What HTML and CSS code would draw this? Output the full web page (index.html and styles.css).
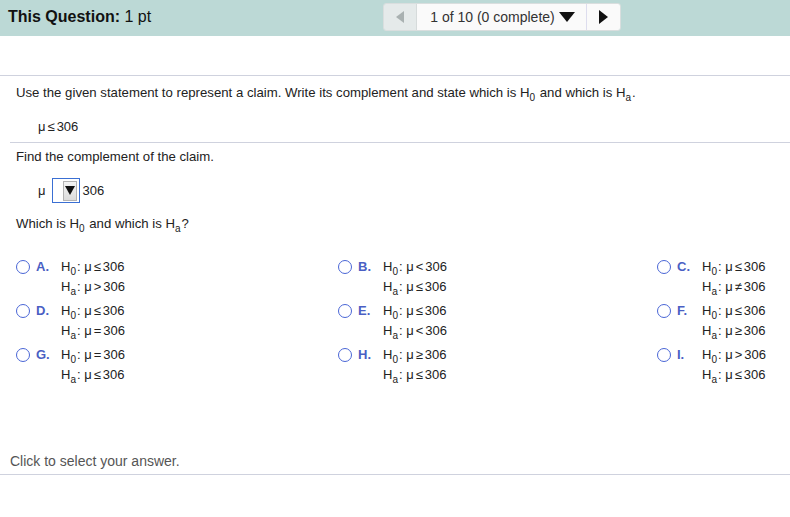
FILE: index.html
```html
<!DOCTYPE html>
<html>
<head>
<meta charset="utf-8">
<link rel="stylesheet" href="styles.css">
</head>
<body>
<div class="header">
  <div class="title"><b>This Question:</b> 1 pt</div>
  <div class="nav">
    <div class="nbtn prev"><span class="tri-left"></span></div>
    <div class="nbtn mid">1 of 10 (0 complete) <span class="tri-down"></span></div>
    <div class="nbtn next"><span class="tri-right"></span></div>
  </div>
</div>

<div class="question">
  <p class="q1">Use the given statement to represent a claim. Write its complement and state which is H<sub>0</sub> and which is H<sub>a</sub>.</p>
  <p class="math claim">μ<span class="op">≤</span>306</p>
</div>

<div class="work">
  <p class="q2">Find the complement of the claim.</p>
  <div class="selrow math">
    <span>μ</span>
    <span class="selbox"><span class="selbtn"><span class="tri-down small"></span></span></span>
    <span>306</span>
  </div>
  <p class="q3">Which is H<sub>0</sub> and which is H<sub>a</sub>?</p>

  <div class="options">
    <div class="opt"><span class="radio"></span><span class="letter">A.</span><div class="hyp"><div>H<sub>0</sub>: μ<span class="op">≤</span>306</div><div>H<sub>a</sub>: μ<span class="op">&gt;</span>306</div></div></div>
    <div class="opt"><span class="radio"></span><span class="letter">B.</span><div class="hyp"><div>H<sub>0</sub>: μ<span class="op">&lt;</span>306</div><div>H<sub>a</sub>: μ<span class="op">≤</span>306</div></div></div>
    <div class="opt"><span class="radio"></span><span class="letter">C.</span><div class="hyp"><div>H<sub>0</sub>: μ<span class="op">≤</span>306</div><div>H<sub>a</sub>: μ<span class="op">≠</span>306</div></div></div>
    <div class="opt"><span class="radio"></span><span class="letter">D.</span><div class="hyp"><div>H<sub>0</sub>: μ<span class="op">≤</span>306</div><div>H<sub>a</sub>: μ<span class="op">=</span>306</div></div></div>
    <div class="opt"><span class="radio"></span><span class="letter">E.</span><div class="hyp"><div>H<sub>0</sub>: μ<span class="op">≤</span>306</div><div>H<sub>a</sub>: μ<span class="op">&lt;</span>306</div></div></div>
    <div class="opt"><span class="radio"></span><span class="letter">F.</span><div class="hyp"><div>H<sub>0</sub>: μ<span class="op">≤</span>306</div><div>H<sub>a</sub>: μ<span class="op">≥</span>306</div></div></div>
    <div class="opt"><span class="radio"></span><span class="letter">G.</span><div class="hyp"><div>H<sub>0</sub>: μ<span class="op">=</span>306</div><div>H<sub>a</sub>: μ<span class="op">≤</span>306</div></div></div>
    <div class="opt"><span class="radio"></span><span class="letter">H.</span><div class="hyp"><div>H<sub>0</sub>: μ<span class="op">≥</span>306</div><div>H<sub>a</sub>: μ<span class="op">≤</span>306</div></div></div>
    <div class="opt"><span class="radio"></span><span class="letter">I.</span><div class="hyp"><div>H<sub>0</sub>: μ<span class="op">&gt;</span>306</div><div>H<sub>a</sub>: μ<span class="op">≤</span>306</div></div></div>
  </div>
</div>

<div class="footer">Click to select your answer.</div>
</body>
</html>
```

FILE: styles.css
```css
body {
  margin: 0;
  font-family: "Liberation Sans", Arial, sans-serif;
  color: #222;
  background: #fff;
}
p { margin: 0; }
sub { font-size: 10px; line-height: 0; vertical-align: -4px; margin-right: 1px; }

.header {
  height: 36px;
  background: #bcd9d6;
  display: flex;
  align-items: flex-start;
}
.title {
  flex: 0 0 375px;
  padding-left: 8px;
  font-size: 16px;
  line-height: 34px;
  color: #111;
}
.nav {
  display: flex;
  margin-top: 3px;
  height: 28px;
  border-radius: 3px;
  overflow: hidden;
  border: 1px solid #d9dede;
  box-sizing: border-box;
}
.nbtn {
  display: flex;
  align-items: center;
  justify-content: center;
  background: #fafafa;
  font-size: 14px;
  color: #333;
}
.prev { width: 32px; background: #e5eaea; border-right: 1px solid #d6dbdb; }
.mid { width: 170px; padding-left: 2px; box-sizing: border-box; border-right: 1px solid #dde; gap: 4px; }
.next { width: 33px; }
.tri-left { width: 0; height: 0; border-top: 6px solid transparent; border-bottom: 6px solid transparent; border-right: 8px solid #a9b1b1; }
.tri-right { width: 0; height: 0; border-top: 7px solid transparent; border-bottom: 7px solid transparent; border-left: 9px solid #111; }
.tri-down { display: inline-block; width: 0; height: 0; border-left: 8px solid transparent; border-right: 8px solid transparent; border-top: 10px solid #111; }
.tri-down.small { border-left-width: 5px; border-right-width: 5px; border-top-width: 9px; }

.question {
  margin-top: 39px;
  border-top: 1px solid #cfd2de;
  padding: 7px 0 5px 16px;
  font-size: 13.2px;
  line-height: 20px;
}
.math { font-size: 13px; }
.op { margin: 0 2px; }
.claim { margin-top: 14px; padding-left: 22px; }

.work {
  margin-left: 10px;
  border-top: 1px solid #cfd2de;
  padding: 4px 0 0 6px;
  font-size: 13.2px;
  line-height: 20px;
}
.selrow {
  margin-top: 11px;
  padding-left: 22px;
  display: flex;
  align-items: center;
  height: 25px;
}
.selbox {
  display: flex;
  align-items: center;
  justify-content: flex-end;
  width: 28px;
  height: 25px;
  box-sizing: border-box;
  border: 1px solid #3a6fd3;
  margin: 0 3px 0 6px;
  padding-right: 2px;
}
.selbtn {
  width: 14px;
  height: 20px;
  box-sizing: border-box;
  border: 1px solid #b3b3b3;
  background: linear-gradient(#f4f4f4, #dcdcdc);
  display: flex;
  align-items: center;
  justify-content: center;
}
.q3 { margin-top: 11px; }

.options {
  margin-top: 23px;
  display: grid;
  grid-template-columns: 322px 319px auto;
  row-gap: 4px;
  font-size: 13px;
}
.opt { display: flex; align-items: flex-start; }
.radio {
  width: 14px;
  height: 14px;
  box-sizing: border-box;
  border: 1.5px solid #4a66d6;
  border-radius: 50%;
  margin-top: 3px;
  margin-right: 6px;
}
.letter { width: 25px; color: #4a5fc4; font-weight: bold; }

.footer {
  margin-top: 66px;
  padding-left: 10px;
  font-size: 14px;
  line-height: 20px;
  color: #555;
  padding-bottom: 3px;
  border-bottom: 1px solid #cfd2de;
}
```
